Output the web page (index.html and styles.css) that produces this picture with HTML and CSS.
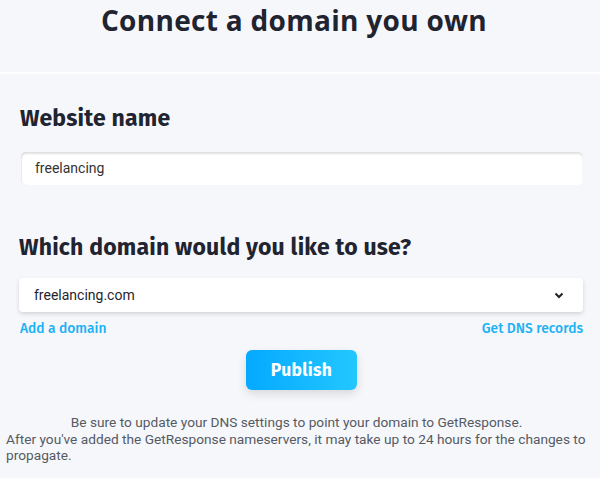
FILE: index.html
```html
<!DOCTYPE html>
<html>
<head>
<meta charset="utf-8">
<link rel="stylesheet" href="styles.css">
</head>
<body>
<div class="page">
  <header class="top">
    <h1 class="title">Connect a domain you own</h1>
  </header>
  <main class="content">
    <h2 class="label">Website name</h2>
    <div class="input">freelancing</div>
    <h2 class="label label-domain">Which domain would you like to use?</h2>
    <div class="select">
      <span>freelancing.com</span>
      <svg class="chev" width="10" height="7" viewBox="0 0 10 7"><path d="M1.5 1.5 L5 5 L8.5 1.5" fill="none" stroke="#1d222b" stroke-width="2"/></svg>
    </div>
    <div class="links">
      <a class="link">Add a domain</a>
      <a class="link">Get DNS records</a>
    </div>
    <div class="actions">
      <button class="publish">Publish</button>
    </div>
    <p class="note note-center">Be sure to update your DNS settings to point your domain to GetResponse.</p>
    <p class="note note-left">After you've added the GetResponse nameservers, it may take up to 24 hours for the changes to propagate.</p>
  </main>
</div>
</body>
</html>
```
FILE: styles.css
```css
html, body {
  margin: 0;
  padding: 0;
  background: #f6f7fb;
}
.page {
  width: 600px;
  height: 478px;
  overflow: hidden;
  color: #1f2430;
}
.top {
  height: 72px;
  border-bottom: 2px solid #ffffff;
}
.title {
  margin: 0;
  padding: 1px 12px 0 0;
  text-align: center;
  font-family: "Open Sans", sans-serif;
  font-weight: 700;
  font-size: 28px;
  line-height: 38px;
  letter-spacing: 0.3px;
}
.content {
  padding: 0 17px 0 20px;
}
.label {
  margin: 30px 0 0 0;
  font-family: "Fira Sans", "Lato", sans-serif;
  font-weight: 700;
  font-size: 23px;
  line-height: 28px;
  letter-spacing: 0.2px;
  color: #1f2430;
}
.label-domain {
  margin-top: 48px;
  margin-left: -1px;
}
.input {
  margin-top: 20px;
  margin-left: 1px;
  height: 33px;
  box-sizing: border-box;
  background: #fff;
  border-radius: 5px;
  box-shadow: inset 0 2px 2px rgba(0,0,0,0.12), inset 1px 0 1px rgba(0,0,0,0.06);
  padding-left: 14px;
  font-family: Roboto, sans-serif;
  font-size: 14px;
  line-height: 33px;
  color: #333;
}
.select {
  margin-top: 17px;
  margin-left: -1px;
  height: 34px;
  box-sizing: border-box;
  background: #fff;
  border-radius: 4px;
  box-shadow: 0 2px 4px rgba(0,0,0,0.14);
  padding: 0 19px 0 15px;
  display: flex;
  align-items: center;
  justify-content: space-between;
  font-family: Roboto, sans-serif;
  font-size: 14px;
  color: #1f2430;
}
.chev { display: block; }
.links {
  display: flex;
  justify-content: space-between;
  margin-top: 8px;
  margin-right: 0;
}
.link {
  font-family: "Fira Sans", "Lato", sans-serif;
  font-size: 13.8px;
  line-height: 18px;
  color: #1ab2f5;
  font-weight: 500;
}
.actions {
  display: flex;
  justify-content: center;
  margin-top: 12px;
}
.publish {
  width: 111px;
  height: 40px;
  border: none;
  border-radius: 6px;
  background: linear-gradient(90deg, #05a9ff, #22c7ff);
  box-shadow: 0 4px 10px rgba(0,0,0,0.12);
  color: #fff;
  font-family: "Fira Sans", "Lato", sans-serif;
  font-weight: 700;
  font-size: 17.5px;
  letter-spacing: 0.3px;
  padding: 0;
}
.note {
  font-family: Roboto, sans-serif;
  font-size: 13.7px;
  line-height: 16.5px;
  color: #555a63;
}
.note-center {
  text-align: center;
  margin: 24px -4px 0 -14px;
}
.note-left {
  margin: 0 -12px 0 -14px;
}
```
